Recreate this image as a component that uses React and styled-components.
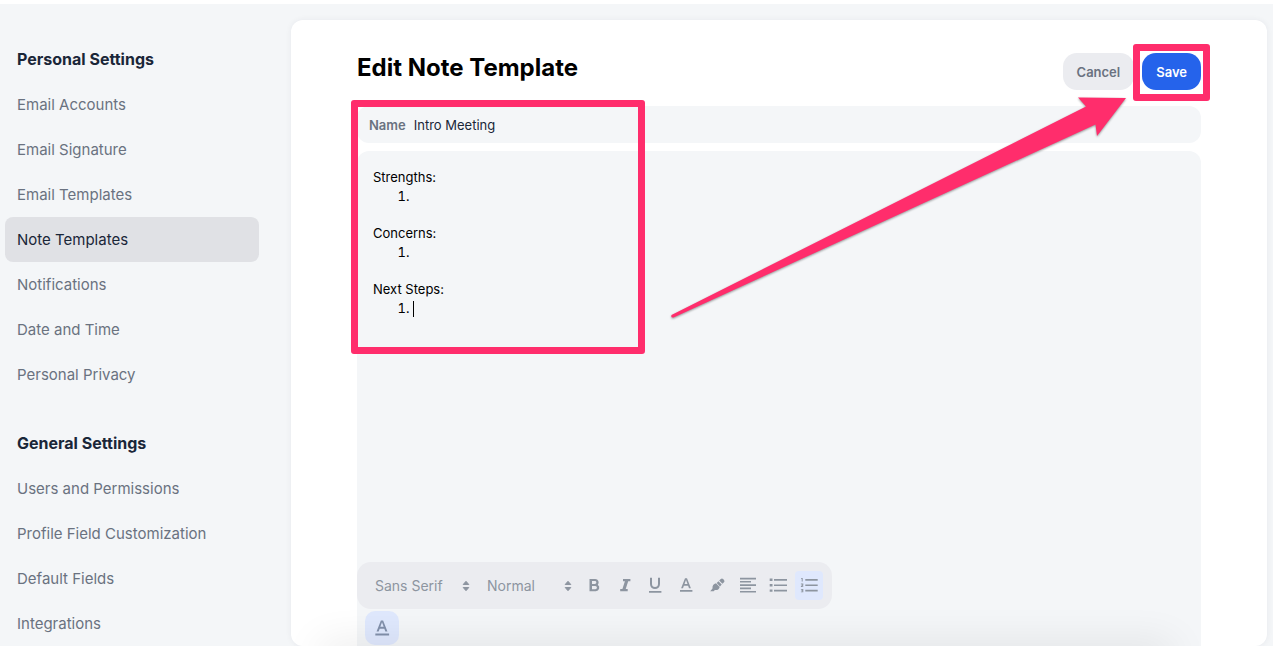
import { createGlobalStyle, styled } from "styled-components";

const personalLinks = [
    "Email Accounts",
    "Email Signature",
    "Email Templates",
    "Note Templates",
    "Notifications",
    "Date and Time",
    "Personal Privacy"
]
const generalLinks = [
    "Users and Permissions",
    "Profile Field Customization",
    "Default Fields",
    "Integrations"
]
const sections = ["Strengths:", "Concerns:", "Next Steps:"]

const icons = {
    Bold: <path fillRule="evenodd" d="M3.500 2h5.800a3.500 3.500 0 0 1 2.500 5.800A3.600 3.600 0 0 1 9.800 14.300H3.500zM6 4v2.900h2.900a1.450 1.450 0 0 0 0-2.900zM6 8.900v3.300h3.300a1.650 1.650 0 0 0 0-3.300z"/>,
    Italic: <path d="M6 2h7.400v2.200h-2.200l-2.500 7.800h2v2.200H3.200V12h2.200l2.500-7.800H6z"/>,
    Underline: <path d="M3 .8h2v6.300a3 3 0 0 0 6 0V.8h2v6.300a5 5 0 0 1-10 0zM2 14h12.400v1.700H2z"/>,
    "Text color": <path fillRule="evenodd" d="M7 1.200h2l3.900 10H11l-.9-2.500H5.900L5 11.200H3.100zM6.500 7h3L8 2.900zM2 13.100h12.400v1.600H2z"/>,
    Highlight: <path d="M10.200 3.600 11.800 2a1.700 1.700 0 0 1 2.300 0l.9.9a1.700 1.700 0 0 1 0 2.300l-1.600 1.600zM9.400 4.300l3.300 3.300-1.700 1.800L7.700 6zM7 6.300 10.700 10c-.9 2.900-2.700 3.300-4.800 3L4.700 14.300H1.200l2.300-2.700C3.300 8.700 4.400 6.900 7 6.300z"/>,
    Align: <path d="M0 .8h16v1.600H0zM0 4h11v1.600H0zM0 7.300h16v1.600H0zM0 10.600h11v1.600H0zM0 13.900h16v1.600H0z"/>,
    "Bullet list": <path d="M-.3 1.600h2.800v2.400H-.3zM4 2h13v1.700H4zM-.3 7h2.800v2.400H-.3zM4 7.400h13v1.700H4zM-.3 12.400h2.800v2.400H-.3zM4 12.800h13v1.700H4z"/>,
    "Numbered list": <path d="M4.300 2h12.400v1.700H4.300zM4.300 7.400h12.400v1.700H4.300zM4.300 12.800h12.400v1.700H4.300zM.3 1h1.400v3.400H.7V2H.1zM-.1 6.600h2.400v1.800l-1.200.8h1.200v.9H-.1V8.900l1.300-.9v-.5H-.1zM-.1 11.900h2.400v3.400H-.1v-.8h1.400v-.5H.4v-.8h.9v-.5H-.1z"/>
}

function Icon({name}){
    return (
        <svg width="18" height="17" viewBox="-1 0 18 17" fill="currentColor" overflow="visible" aria-hidden="true">
            {icons[name]}
        </svg>
    )
}

function Picker({label, value, width}){
    return (
        <PickerBox $width={width}>
            <select aria-label={label} defaultValue={value}>
                <option>{value}</option>
            </select>
            <svg width="8" height="12" viewBox="0 0 8 12" fill="currentColor" stroke="currentColor" strokeLinejoin="round" aria-hidden="true">
                <path d="M4 1.300 6.800 4.500H1.200zM4 10.700 1.200 7.500h5.600z"/>
            </svg>
        </PickerBox>
    )
}

function NavSection({title, links}){
    return (
        <Section>
            <h2>{title}</h2>
            {links.map(link =><NavLink key={link} href="#" $active={link==="Note Templates"}>{link}</NavLink>)}
        </Section>
    )
}

export default function App(){
    return (
        <Page>
            <GlobalStyle/>
            <Sidebar>
                <NavSection title="Personal Settings" links={personalLinks}/>
                <NavSection title="General Settings" links={generalLinks}/>
            </Sidebar>
            <Panel>
                <Header>
                    <h1>Edit Note Template</h1>
                    <Actions>
                        <Button>Cancel</Button>
                        <SaveArea>
                            <Button $primary>Save</Button>
                            <SaveFrame/>
                            <Arrow width="460" height="228" viewBox="0 0 460 228" aria-hidden="true">
                                <path d="M1.500 217 416 8.500 408 -.5 456 0 427 38 425.500 26.500 3.500 219.500Q.5 220 1.500 217z"/>
                            </Arrow>
                        </SaveArea>
                    </Actions>
                </Header>
                <Form>
                    <NameField>
                        <label htmlFor="name">Name</label>
                        <input id="name" type="text" defaultValue="Intro Meeting"/>
                    </NameField>
                    <Editor>
                        <Content contentEditable suppressContentEditableWarning role="textbox" aria-label="Note template" aria-multiline="true" spellCheck={false}>
                            {sections.map((section, i) =>(
                                <Block key={section}>
                                    <p>{section}</p>
                                    <ol><li>{i===sections.length-1&&<Caret/>}</li></ol>
                                </Block>
                            ))}
                        </Content>
                        <Toolbar>
                            <Picker label="Font" value="Sans Serif" width="95px"/>
                            <Picker label="Size" value="Normal" width="85px"/>
                            <Tools>
                                {Object.keys(icons).map(name =>(
                                    <Tool key={name} type="button" aria-label={name} $active={name==="Numbered list"}><Icon name={name}/></Tool>
                                ))}
                            </Tools>
                        </Toolbar>
                        <FormatToggle type="button" aria-label="Toggle formatting"><Icon name="Text color"/></FormatToggle>
                    </Editor>
                    <FormFrame/>
                </Form>
            </Panel>
            <BottomShade/>
        </Page>
    )
}

const GlobalStyle = createGlobalStyle`
    *{
        box-sizing: border-box;
    }

    body{
        margin: 0;
        font-family: Inter, "Liberation Sans", sans-serif;
        background-color: #f4f6f8;
        overflow: hidden;
    }

    h1, h2, p, ol{
        margin: 0;
    }

    button, input, select{
        font-family: inherit;
        border: none;
    }
`
const Page = styled.div`
    position: relative;
    display: flex;
    min-height: 100vh;
    border-top: 4px solid #ffffff;
    background-color: #f4f6f8;
    overflow: hidden;
`
const Sidebar = styled.nav`
    display: flex;
    flex-direction: column;
    flex: 0 0 291px;
    gap: 24px;
    padding: 33px 32px 0 5px;
`
const Section = styled.div`
    display: flex;
    flex-direction: column;

    h2{
        padding: 0 12px;
        font-weight: 700;
        font-size: 16px;
        line-height: 45px;
        color: #1a2638;
    }
`
const NavLink = styled.a`
    padding: 0 12px;
    border-radius: 8px;
    font-size: 15px;
    line-height: 45px;
    text-decoration: none;
    color: ${props => props.$active?"#1a2638":"#6a7280"};
    background-color: ${props => props.$active?"#e0e1e5":"transparent"};
`
const Panel = styled.main`
    display: flex;
    flex-direction: column;
    flex: 1;
    min-width: 0;
    margin: 16px 6px 0 0;
    padding: 33px 66px 0;
    border-radius: 12px;
    background-color: #ffffff;
    box-shadow: 0 0 6px rgba(30, 40, 60, 0.06);
`
const Header = styled.header`
    display: flex;
    justify-content: space-between;
    align-items: flex-start;
    height: 53px;

    h1{
        font-weight: 700;
        font-size: 24px;
        line-height: 30px;
        color: #000000;
    }
`
const Actions = styled.div`
    display: flex;
    gap: 8px;
`
const Button = styled.button`
    height: 37px;
    padding: 0 14px;
    border-radius: 14px;
    font-weight: 600;
    font-size: 13px;
    color: ${props => props.$primary?"#ffffff":"#6a7280"};
    background-color: ${props => props.$primary?"#2563eb":"#ebecf0"};
`
const SaveArea = styled.div`
    position: relative;
`
const SaveFrame = styled.div`
    position: absolute;
    inset: -9px -9px -11px;
    border: 7px solid #ff2d6c;
    border-radius: 3px;
    pointer-events: none;
`
const Arrow = styled.svg`
    position: absolute;
    top: 45px;
    right: 71px;
    z-index: 2;
    overflow: visible;
    fill: #ff2d6c;
    filter: drop-shadow(0 1px 1px rgba(0, 0, 0, 0.4));
    pointer-events: none;
`
const Form = styled.form`
    position: relative;
    display: flex;
    flex-direction: column;
    flex: 1;
    gap: 8px;
`
const FormFrame = styled.div`
    position: absolute;
    top: -6px;
    left: -6px;
    width: 294px;
    height: 254px;
    border: 7px solid #ff2d6c;
    border-radius: 3px;
    pointer-events: none;
`
const NameField = styled.div`
    display: flex;
    align-items: center;
    gap: 8px;
    height: 37px;
    padding: 0 12px;
    border-radius: 12px;
    background-color: #f4f6f8;

    label{
        font-weight: 600;
        font-size: 13px;
        color: #6a7280;
    }

    input{
        flex: 1;
        padding: 0;
        font-size: 13px;
        color: #1a2638;
        background: none;
        outline: none;
    }
`
const Editor = styled.div`
    display: flex;
    flex-direction: column;
    align-items: flex-start;
    flex: 1;
    padding-bottom: 1px;
    border-radius: 12px 12px 0 0;
    background-color: #f4f6f8;
`
const Content = styled.div`
    display: flex;
    flex-direction: column;
    flex: 1;
    gap: 18px;
    width: 100%;
    padding: 17px 16px;
    font-size: 13px;
    line-height: 19px;
    color: #000000;
    outline: none;
`
const Block = styled.div`
    ol{
        padding-left: 40px;
    }
`
const Caret = styled.span`
    display: inline-block;
    width: 1px;
    height: 16px;
    vertical-align: middle;
    background-color: #000000;
`
const Toolbar = styled.div`
    display: flex;
    align-items: center;
    height: 47px;
    padding: 0 9px 0 18px;
    border-radius: 14px;
    background-color: #ebecf0;
`
const PickerBox = styled.div`
    position: relative;
    display: flex;
    align-items: center;
    width: ${props => props.$width};
    margin-right: 17px;
    color: #8d95a0;

    select{
        appearance: none;
        width: 100%;
        padding: 0;
        font-size: 14px;
        color: inherit;
        background: none;
    }

    svg{
        position: absolute;
        right: 0;
        pointer-events: none;
    }
`
const Tools = styled.div`
    display: flex;
    justify-content: space-between;
    width: 243px;
    margin-left: -9px;
`
const Tool = styled.button`
    display: flex;
    justify-content: center;
    align-items: center;
    width: 28px;
    height: 29px;
    padding: 0;
    border-radius: 4px;
    color: #8d95a0;
    background-color: ${props => props.$active?"#dfe8fd":"transparent"};
`
const FormatToggle = styled.button`
    display: flex;
    justify-content: center;
    align-items: center;
    width: 34px;
    height: 34px;
    margin: 2px 0 0 8px;
    padding: 0;
    border-radius: 10px;
    color: #8290ab;
    background-color: #dfe8fd;

    svg{
        width: 20px;
        height: 19px;
    }
`
const BottomShade = styled.div`
    position: absolute;
    right: 100px;
    bottom: -20px;
    left: 320px;
    height: 20px;
    box-shadow: 0 0 40px rgba(0, 0, 0, 0.12);
    pointer-events: none;
`
